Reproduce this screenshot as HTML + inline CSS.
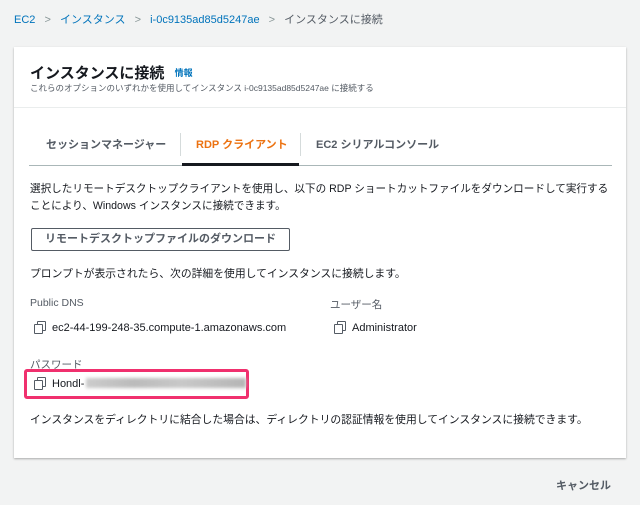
<!DOCTYPE html>
<html><head><meta charset="utf-8"><style>
*{margin:0;padding:0;box-sizing:border-box}
body{width:640px;height:505px;background:#f2f3f3;font-family:"Liberation Sans","Noto Sans CJK JP",sans-serif;color:#16191f;position:relative;overflow:hidden;font-size:11px}
.a{position:absolute;white-space:nowrap}
.bc{color:#0073bb}
.card{position:absolute;left:14px;top:47px;width:612px;height:411px;background:#fff;box-shadow:0 1px 2px rgba(0,0,0,.3)}
.hdr{position:absolute;left:0;top:0;width:612px;height:61px;border-bottom:1px solid #eaeded}
.cp{display:inline-block;width:11px;height:11px;position:relative;vertical-align:-1px;margin-right:7px}
.cp:before{content:"";position:absolute;left:3px;top:0;width:7px;height:8px;border:1.3px solid #545b64;border-radius:1px}
.cp:after{content:"";position:absolute;left:0;top:3px;width:7px;height:8px;border:1.3px solid #545b64;border-radius:1px;background:#fff}
.lbl{color:#545b64;font-size:10.5px}
</style></head><body>
<div class="a" style="left:14px;top:11px;font-size:11px"><span class="bc">EC2</span> <span style="color:#879596;margin:0 6px">&gt;</span> <span class="bc">インスタンス</span> <span style="color:#879596;margin:0 6px">&gt;</span> <span class="bc">i-0c9135ad85d5247ae</span> <span style="color:#879596;margin:0 6px">&gt;</span> <span style="color:#545b64">インスタンスに接続</span></div>
<div class="card">
<div class="hdr">
<div class="a" style="left:16px;top:15px;font-size:15px;font-weight:bold">インスタンスに接続 <span style="font-size:9px;color:#0073bb;margin-left:6px;vertical-align:2px">情報</span></div>
<div class="a" style="left:16px;top:35px;font-size:8.5px;color:#545b64">これらのオプションのいずれかを使用してインスタンス i-0c9135ad85d5247ae に接続する</div>
</div>
<div class="a" style="left:15px;top:118px;width:583px;height:1px;background:#aab7b8"></div>
<div class="a" style="left:168px;top:116px;width:117px;height:3px;background:#16191f"></div>
<div class="a" style="left:166px;top:86px;width:1px;height:23px;background:#d5dbdb"></div>
<div class="a" style="left:286px;top:86px;width:1px;height:23px;background:#d5dbdb"></div>
<div class="a" style="left:32px;top:89px;font-size:11px;font-weight:bold;color:#545b64">セッションマネージャー</div>
<div class="a" style="left:182px;top:89px;font-size:11px;font-weight:bold;color:#ec7211">RDP クライアント</div>
<div class="a" style="left:302px;top:89px;font-size:11px;font-weight:bold;color:#545b64">EC2 シリアルコンソール</div>
<div class="a" style="left:16px;top:134px;font-size:10.6px;line-height:17px">選択したリモートデスクトップクライアントを使用し、以下の RDP ショートカットファイルをダウンロードして実行する<br>ことにより、Windows インスタンスに接続できます。</div>
<div class="a" style="left:17px;top:181px;width:259px;height:23px;border:1.5px solid #545b64;border-radius:2px;font-weight:bold;font-size:11px;color:#545b64;text-align:center;line-height:20px">リモートデスクトップファイルのダウンロード</div>
<div class="a" style="left:16px;top:218px;font-size:10.8px">プロンプトが表示されたら、次の詳細を使用してインスタンスに接続します。</div>
<div class="a lbl" style="left:16px;top:250px">Public DNS</div>
<div class="a lbl" style="left:316px;top:250px">ユーザー名</div>
<div class="a" style="left:20px;top:274px"><span class="cp"></span>ec2-44-199-248-35.compute-1.amazonaws.com</div>
<div class="a" style="left:320px;top:274px"><span class="cp"></span>Administrator</div>
<div class="a lbl" style="left:16px;top:310px">パスワード</div>
<div class="a" style="left:10px;top:322px;width:225px;height:30px;border:3px solid #f0306e;border-radius:3px"></div>
<div class="a" style="left:20px;top:330px"><span class="cp"></span>Hondl-</div>
<div class="a" style="left:72px;top:331px;width:160px;height:10px;background:linear-gradient(90deg,#ccc,#bbb 30%,#c8c8c8 60%,#b5b5b5);filter:blur(1.5px)"></div>
<div class="a" style="left:16px;top:364px;font-size:10.8px">インスタンスをディレクトリに結合した場合は、ディレクトリの認証情報を使用してインスタンスに接続できます。</div>
</div>
<div class="a" style="left:556px;top:477px;font-size:11px;font-weight:bold;color:#545b64">キャンセル</div>
</body></html>
